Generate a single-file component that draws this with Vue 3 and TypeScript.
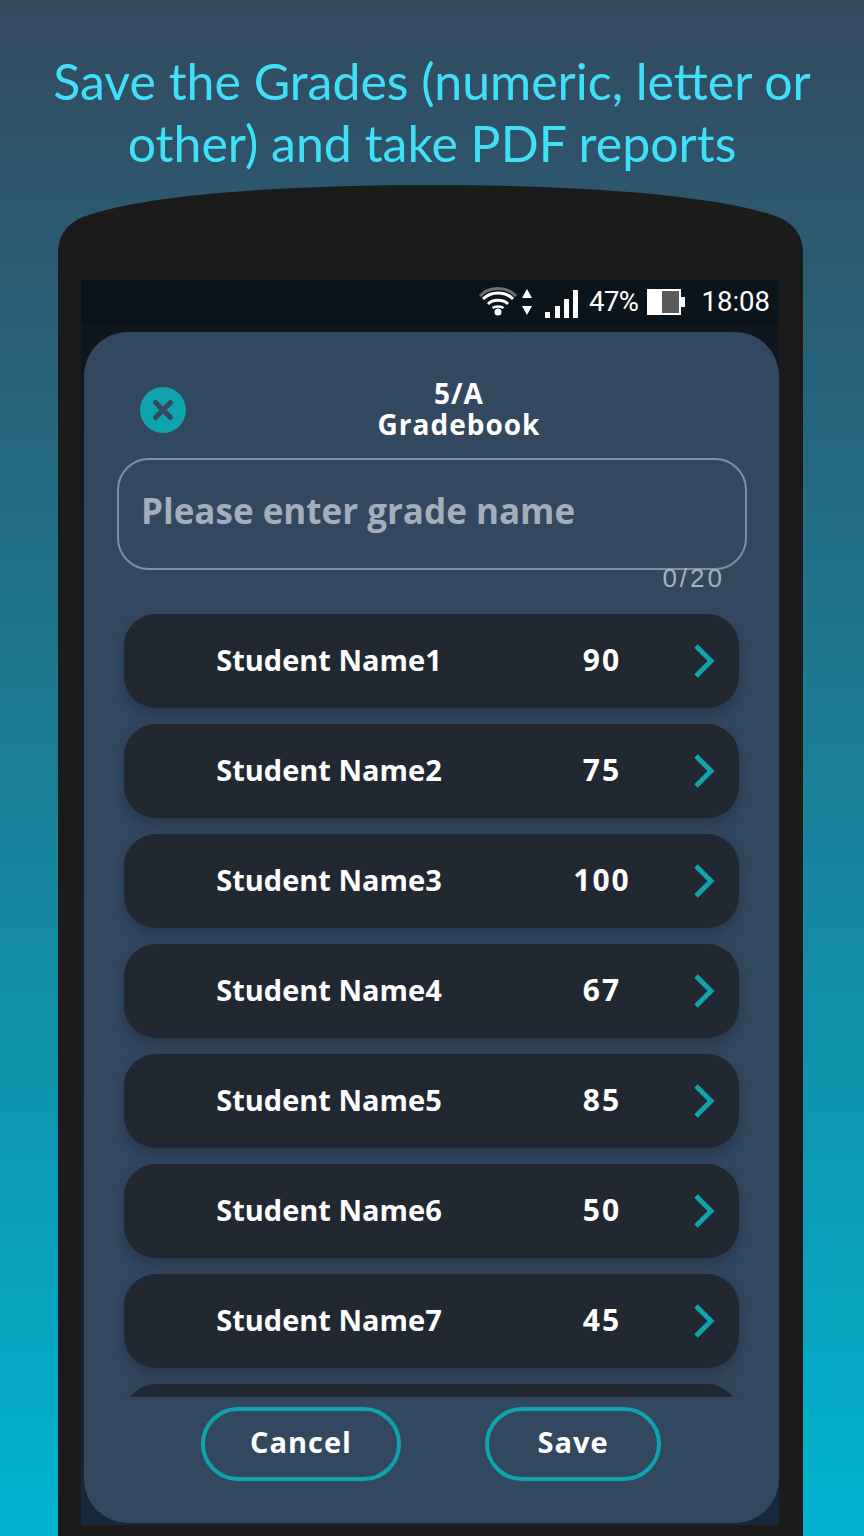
<script setup lang="ts">
const students: { name: string; grade: string }[] = [
  { name: 'Student Name1', grade: '90' },
  { name: 'Student Name2', grade: '75' },
  { name: 'Student Name3', grade: '100' },
  { name: 'Student Name4', grade: '67' },
  { name: 'Student Name5', grade: '85' },
  { name: 'Student Name6', grade: '50' },
  { name: 'Student Name7', grade: '45' },
  { name: '', grade: '' },
]
</script>

<template>
  <div class="page">
    <h1 class="headline">Save the Grades (numeric, letter or<br />other) and take PDF reports</h1>
    <div class="phone">
      <div class="screen">
        <div class="status">
          <svg class="wifi" viewBox="0 0 40 32" width="40" height="32">
            <path d="M2 12 C11 2 29 2 38 12" fill="none" stroke="#6b7074" stroke-width="3" />
            <path d="M5 15 C13 7 27 7 35 15" fill="none" stroke="#fff" stroke-width="3" />
            <path d="M10 20 C15 15 25 15 30 20" fill="none" stroke="#fff" stroke-width="3" />
            <path d="M14.5 24 C17 22 23 22 25.500 24" fill="none" stroke="#fff" stroke-width="2.500" />
            <circle cx="20" cy="28" r="3.500" fill="#fff" />
          </svg>
          <svg class="arrows" viewBox="0 0 12 28" width="12" height="28">
            <path d="M6 1 L11 10 H1 Z M6 27 L1 18 H11 Z" fill="#fff" />
          </svg>
          <svg class="signal" viewBox="0 0 34 28" width="34" height="28">
            <path d="M0 22 H5 V28 H0 Z M10 16 H15 V28 H10 Z M19 9 H24 V28 H19 Z M28 0 H33 V28 H28 Z" fill="#fff" />
          </svg>
          <span class="pct">47%</span>
          <svg class="battery" viewBox="0 0 38 26" width="38" height="26">
            <rect x="0" y="0" width="34" height="26" fill="#fff" />
            <rect x="15" y="2" width="17" height="22" fill="#5a5a5a" />
            <rect x="34" y="8" width="4" height="10" fill="#fff" />
          </svg>
          <span class="clock">18:08</span>
        </div>
        <section class="modal">
          <header class="modal-head">
            <button class="close" aria-label="Close">
              <svg viewBox="0 0 24 24" width="30" height="30">
                <path d="M6 6 L18 18 M18 6 L6 18" stroke="#34495e" stroke-width="4" stroke-linecap="round" />
              </svg>
            </button>
            <div class="title">
              <div>5/A</div>
              <div>Gradebook</div>
            </div>
          </header>
          <div class="field">
            <span class="placeholder">Please enter grade name</span>
          </div>
          <div class="counter">0/20</div>
          <div class="list">
            <div v-for="(s, i) in students" :key="i" class="row">
              <span class="name">{{ s.name }}</span>
              <span class="grade">{{ s.grade }}</span>
              <svg class="chev" viewBox="0 0 22 34" width="22" height="34">
                <path d="M3 2 L18 17 L3 32" fill="none" stroke="#0fa3ad" stroke-width="5" />
              </svg>
            </div>
          </div>
          <footer class="actions">
            <button class="btn cancel">Cancel</button>
            <button class="btn save">Save</button>
          </footer>
        </section>
      </div>
    </div>
  </div>
</template>

<style>
html, body { margin: 0; padding: 0; }
</style>

<style scoped>
.page {
  width: 864px;
  height: 1536px;
  overflow: hidden;
  box-sizing: border-box;
  padding-top: 50px;
  background: linear-gradient(180deg, #34495e 0%, #00b4d0 100%);
  font-family: "Open Sans", "Liberation Sans", sans-serif;
}
.headline {
  margin: 0;
  height: 135px;
  text-align: center;
  font-family: "Lato", sans-serif;
  font-weight: 400;
  font-size: 50px;
  line-height: 62px;
  color: #3fe0f8;
}
.phone {
  width: 745px;
  height: 1351px;
  margin-left: 58px;
  padding: 95px 24px 0 23px;
  box-sizing: border-box;
  background: #1b1b1b;
  clip-path: path("M0 1351 V68 C0 50 10 38 25 32 C90 8 240 0 372 0 C505 0 655 8 720 32 C735 38 745 50 745 68 V1351 Z");
}
.screen {
  height: 1245px;
  background: linear-gradient(180deg, #0e161d 0%, #122030 50%, #16283a 100%);
}
.status {
  height: 43px;
  display: flex;
  align-items: center;
  justify-content: flex-end;
  padding-right: 9px;
  box-sizing: border-box;
  background: #0c141b;
  color: #fff;
  font-family: "Roboto", sans-serif;
  font-size: 27.5px;
}
.wifi { margin-right: 3px; margin-top: -3px; }
.arrows { margin-right: 12px; }
.signal { margin-right: 10px; margin-top: 4px; }
.pct { margin-right: 8px; letter-spacing: -0.5px; }
.battery { margin-right: 17px; }
.modal {
  margin: 9px 0 0 3px;
  width: 695px;
  height: 1191px;
  box-sizing: border-box;
  background: #32485f;
  border-radius: 44px;
  padding-top: 37px;
  display: flex;
  flex-direction: column;
  color: #fff;
}
.modal-head {
  height: 81px;
  display: flex;
  align-items: center;
  padding-left: 56px;
}
.close {
  width: 46px;
  height: 46px;
  padding: 0;
  border: 0;
  border-radius: 50%;
  background: #0fa3ad;
  display: flex;
  align-items: center;
  justify-content: center;
}
.title {
  width: 350px;
  margin-left: 98px;
  margin-top: -2px;
  text-align: center;
  font-weight: 700;
  font-size: 28px;
  letter-spacing: 1px;
  line-height: 31px;
}
.field {
  margin: 8px 32px 0 33px;
  height: 112px;
  box-sizing: border-box;
  border: 2px solid #7f90a0;
  border-radius: 32px;
  padding-left: 22px;
  display: flex;
  align-items: center;
}
.placeholder {
  font-weight: 700;
  font-size: 35px;
  color: #a3afbb;
  position: relative;
  top: -4px;
}
.counter {
  height: 50px;
  text-align: right;
  padding-right: 54px;
  margin-top: -6px;
  font-family: "Liberation Sans", sans-serif;
  font-size: 26px;
  letter-spacing: 3px;
  line-height: 28px;
  color: #a6b2bd;
}
.list {
  height: 783px;
  overflow: hidden;
  margin: 0 33px 0 33px;
  padding: 0 7px;
  display: flex;
  flex-direction: column;
  gap: 15px;
}
.row {
  flex: 0 0 94px;
  display: flex;
  align-items: center;
  margin-bottom: 1px;
  background: #222831;
  border-radius: 32px;
  box-shadow: 0 6px 12px rgba(20, 32, 46, 0.35);
  font-weight: 700;
  font-size: 29px;
}
.name {
  width: 410px;
  text-align: center;
  position: relative;
  top: -2px;
}
.grade {
  width: 136px;
  text-align: center;
  font-size: 30px;
  letter-spacing: 2px;
  position: relative;
  top: -2px;
}
.chev {
  margin-left: 23px;
}
.actions {
  display: flex;
  padding: 10px 0 0 117px;
  gap: 84px;
}
.btn {
  height: 74px;
  box-sizing: border-box;
  border: 4px solid #0fa3ad;
  border-radius: 37px;
  background: transparent;
  color: #fff;
  font-family: inherit;
  font-weight: 700;
  font-size: 29px;
  letter-spacing: 1px;
  padding: 0 0 6px;
}
.cancel { width: 200px; }
.save { width: 176px; }
</style>
